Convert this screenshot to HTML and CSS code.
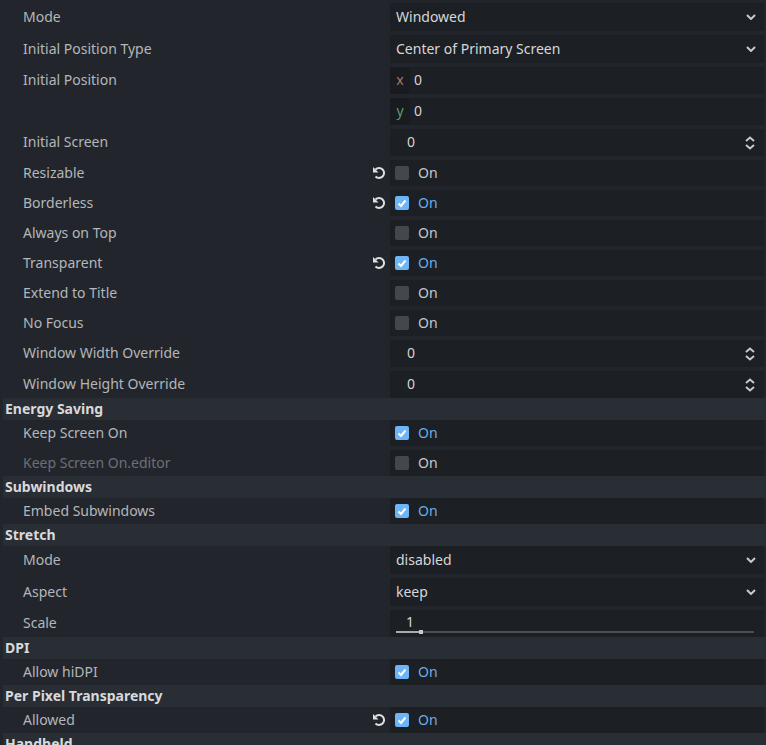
FILE: index.html
```html
<!DOCTYPE html>
<html>
<head>
    <title>Project Settings - Window</title>
    <meta name="viewport" content="width=device-width, initial-scale=1.0">
    <link rel="stylesheet" href="styles.css">
</head>
<body>
    <div class="inspector">
        <!-- Size / window -->
        <div class="prop enum">
            <div class="name">Mode</div>
            <div class="field select"><span>Windowed</span><svg class="chev" viewBox="0 0 10 6"><path d="M1 1 L5 5 L9 1"/></svg></div>
        </div>
        <div class="prop enum">
            <div class="name">Initial Position Type</div>
            <div class="field select"><span>Center of Primary Screen</span><svg class="chev" viewBox="0 0 10 6"><path d="M1 1 L5 5 L9 1"/></svg></div>
        </div>
        <div class="prop vector">
            <div class="name">Initial Position</div>
            <div class="axes">
                <div class="field axis"><span class="tag tag-x">x</span><span>0</span></div>
                <div class="field axis"><span class="tag tag-y">y</span><span>0</span></div>
            </div>
        </div>
        <div class="prop spin">
            <div class="name">Initial Screen</div>
            <div class="field number"><span>0</span><svg class="updown" viewBox="0 0 12 14"><path d="M2 5 L6 1.5 L10 5 M2 9 L6 12.5 L10 9"/></svg></div>
        </div>
        <div class="prop check">
            <div class="name">Resizable<svg class="revert" viewBox="0 0 14 14"><path d="M3.5 10.5 A5 5 0 1 0 3.5 3.5"/><polygon points="1,1 1,6.5 6.5,6.5"/></svg></div>
            <div class="field toggle"><span class="box"></span><span>On</span></div>
        </div>
        <div class="prop check">
            <div class="name">Borderless<svg class="revert" viewBox="0 0 14 14"><path d="M3.5 10.5 A5 5 0 1 0 3.5 3.5"/><polygon points="1,1 1,6.5 6.5,6.5"/></svg></div>
            <div class="field toggle on"><span class="box"><svg viewBox="0 0 14 14"><path d="M3.5 7.5 L6 10 L10.5 4.5"/></svg></span><span>On</span></div>
        </div>
        <div class="prop check">
            <div class="name">Always on Top</div>
            <div class="field toggle"><span class="box"></span><span>On</span></div>
        </div>
        <div class="prop check">
            <div class="name">Transparent<svg class="revert" viewBox="0 0 14 14"><path d="M3.5 10.5 A5 5 0 1 0 3.5 3.5"/><polygon points="1,1 1,6.5 6.5,6.5"/></svg></div>
            <div class="field toggle on"><span class="box"><svg viewBox="0 0 14 14"><path d="M3.5 7.5 L6 10 L10.5 4.5"/></svg></span><span>On</span></div>
        </div>
        <div class="prop check">
            <div class="name">Extend to Title</div>
            <div class="field toggle"><span class="box"></span><span>On</span></div>
        </div>
        <div class="prop check">
            <div class="name">No Focus</div>
            <div class="field toggle"><span class="box"></span><span>On</span></div>
        </div>
        <div class="prop spin">
            <div class="name">Window Width Override</div>
            <div class="field number"><span>0</span><svg class="updown" viewBox="0 0 12 14"><path d="M2 5 L6 1.5 L10 5 M2 9 L6 12.5 L10 9"/></svg></div>
        </div>
        <div class="prop spin">
            <div class="name">Window Height Override</div>
            <div class="field number"><span>0</span><svg class="updown" viewBox="0 0 12 14"><path d="M2 5 L6 1.5 L10 5 M2 9 L6 12.5 L10 9"/></svg></div>
        </div>

        <div class="section">Energy Saving</div>
        <div class="prop check">
            <div class="name">Keep Screen On</div>
            <div class="field toggle on"><span class="box"><svg viewBox="0 0 14 14"><path d="M3.5 7.5 L6 10 L10.5 4.5"/></svg></span><span>On</span></div>
        </div>
        <div class="prop check">
            <div class="name dim">Keep Screen On.editor</div>
            <div class="field toggle"><span class="box"></span><span>On</span></div>
        </div>

        <div class="section">Subwindows</div>
        <div class="prop check">
            <div class="name">Embed Subwindows</div>
            <div class="field toggle on"><span class="box"><svg viewBox="0 0 14 14"><path d="M3.5 7.5 L6 10 L10.5 4.5"/></svg></span><span>On</span></div>
        </div>

        <div class="section">Stretch</div>
        <div class="prop enum">
            <div class="name">Mode</div>
            <div class="field select"><span>disabled</span><svg class="chev" viewBox="0 0 10 6"><path d="M1 1 L5 5 L9 1"/></svg></div>
        </div>
        <div class="prop enum">
            <div class="name">Aspect</div>
            <div class="field select"><span>keep</span><svg class="chev" viewBox="0 0 10 6"><path d="M1 1 L5 5 L9 1"/></svg></div>
        </div>
        <div class="prop slider">
            <div class="name">Scale</div>
            <div class="field range">
                <span>1</span>
                <div class="track"><div class="fill" style="width: 24px"></div><div class="grabber"></div></div>
            </div>
        </div>

        <div class="section">DPI</div>
        <div class="prop check">
            <div class="name">Allow hiDPI</div>
            <div class="field toggle on"><span class="box"><svg viewBox="0 0 14 14"><path d="M3.5 7.5 L6 10 L10.5 4.5"/></svg></span><span>On</span></div>
        </div>

        <div class="section">Per Pixel Transparency</div>
        <div class="prop check">
            <div class="name">Allowed<svg class="revert" viewBox="0 0 14 14"><path d="M3.5 10.5 A5 5 0 1 0 3.5 3.5"/><polygon points="1,1 1,6.5 6.5,6.5"/></svg></div>
            <div class="field toggle on"><span class="box"><svg viewBox="0 0 14 14"><path d="M3.5 7.5 L6 10 L10.5 4.5"/></svg></span><span>On</span></div>
        </div>

        <div class="section">Handheld</div>
    </div>
</body>
</html>
```

FILE: styles.css
```css
/* base */
html, body {
    margin: 0;
    height: 100%;
    overflow: hidden;
}

body {
    background: #22262c;
    font-family: 'Noto Sans', 'Open Sans', sans-serif;
    font-size: 14px;
    color: #d3d4d6;
}

.inspector {
    padding: 3px 2px 0 0;
}

/* property rows */
.prop {
    display: flex;
    align-items: stretch;
}

.prop + .prop {
    margin-top: 4px;
}

.prop.enum { height: 28px; }
.prop.spin,
.prop.slider { height: 27px; }
.prop.check { height: 26px; }

.name {
    width: 390px;
    flex: none;
    display: flex;
    align-items: center;
    padding: 0 0 2px 23px;
    box-sizing: border-box;
    color: #b4b6b9;
}

.name.dim {
    color: #6c7075;
}

.vector .name {
    align-items: flex-start;
    padding-top: 3px;
}

.revert {
    width: 14px;
    height: 14px;
    margin-left: auto;
    margin-right: 4px;
    margin-top: 2px;
}

.revert path {
    fill: none;
    stroke: #e0e0e0;
    stroke-width: 2;
}

.revert polygon {
    fill: #e0e0e0;
}

/* editor fields */
.field {
    flex: 1;
    display: flex;
    align-items: center;
    background: #1c1f24;
    min-width: 0;
}

.field > span {
    padding-bottom: 2px;
}

.select {
    padding: 0 8px 0 6px;
    color: #d6d7d9;
}

.select span,
.number span {
    flex: 1;
}

.chev {
    width: 10px;
    height: 6px;
}

.chev path,
.updown path {
    fill: none;
    stroke: #c8c9cb;
    stroke-width: 2;
}

.number {
    padding: 0 8px 0 17px;
}

.updown {
    width: 12px;
    height: 14px;
}

/* vector2 */
.axes {
    flex: 1;
    display: flex;
    flex-direction: column;
    gap: 4px;
}

.axis {
    height: 27px;
    flex: none;
}

.field > .tag {
    width: 20px;
    align-self: stretch;
    display: flex;
    align-items: center;
    justify-content: center;
    background: #181b1f;
    margin-right: 4px;
}

.tag-x { color: #b27666; }
.tag-y { color: #5e9a6e; }

/* checkbox */
.toggle {
    padding-left: 5px;
    color: #c7c8ca;
}

.field > .box {
    width: 14px;
    height: 14px;
    padding: 0;
    border-radius: 2px;
    background: #44474c;
    margin-right: 9px;
    display: flex;
}

.box svg {
    width: 14px;
    height: 14px;
}

.box path {
    fill: none;
    stroke: #ffffff;
    stroke-width: 2;
}

.toggle.on {
    color: #6aaee8;
}

.toggle.on .box {
    background: #6db5f6;
}

/* range */
.range {
    flex-direction: column;
    align-items: stretch;
    padding: 0 10px 0 6px;
    justify-content: flex-end;
}

.range > span {
    padding: 0 0 0 10px;
    line-height: 18px;
}

.track {
    position: relative;
    height: 2px;
    background: #4a4d52;
    margin-bottom: 4px;
}

.fill {
    height: 2px;
    background: #a8aaad;
}

.grabber {
    position: absolute;
    left: 23px;
    top: -1px;
    width: 4px;
    height: 4px;
    background: #c9cacc;
}

/* section headers */
.section {
    height: 22px;
    margin-left: 3px;
    margin-right: -2px;
    padding: 0 0 2px 2px;
    box-sizing: border-box;
    background: #292d34;
    display: flex;
    align-items: center;
    font-weight: bold;
    color: #d8d9db;
}
```
